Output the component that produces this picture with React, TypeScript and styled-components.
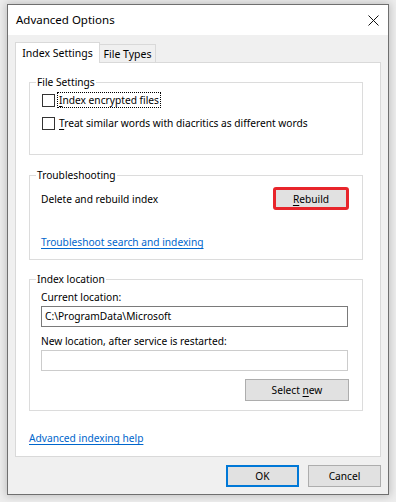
import * as React from 'react';
import styled, { createGlobalStyle, css } from 'styled-components';

const FONT = `'Noto Sans', 'Open Sans', 'DejaVu Sans', sans-serif`;
const FONT_SIZE = 10.2;

const GlobalStyle = createGlobalStyle`
  html, body {
    margin: 0;
    padding: 0;
  }
  body {
    background: #ededed;
    font-family: ${FONT};
    font-size: ${FONT_SIZE}px;
    color: #000;
  }
`;

const Stage = styled('div')`
  width: 396px;
  height: 502px;
  padding: 4px 0 0 7px;
  box-sizing: border-box;
  overflow: hidden;
`;

const Window = styled('div')`
  width: 382px;
  height: 491px;
  box-sizing: border-box;
  border: 1px solid #6f6f6f;
  background: #f0f0f0;
  box-shadow: 0 0 8px 1px rgba(0, 0, 0, 0.2);
  display: flex;
  flex-direction: column;
`;

const TitleBar = styled('div')`
  height: 30px;
  flex: none;
  background: #fff;
  display: flex;
  align-items: center;
  justify-content: space-between;
  padding-left: 8px;
`;

const Title = styled('span')`
  font-size: 11.5px;
  line-height: 16px;
`;

const CloseButton = styled('div')`
  width: 28px;
  height: 30px;
  display: flex;
  align-items: center;
  justify-content: center;
  margin-right: 1px;
`;

const Body = styled('div')`
  flex: 1;
  padding: 7px 7px 0;
  display: flex;
  flex-direction: column;
`;

const TabRow = styled('div')`
  height: 20px;
  display: flex;
  align-items: flex-end;
`;

const Tab = styled('div')<{ $active?: boolean }>`
  box-sizing: border-box;
  border: 1px solid #d9d9d9;
  border-bottom: none;
  display: flex;
  align-items: center;
  justify-content: center;
  line-height: 16px;
  font-size: 10.5px;

  ${props =>
    props.$active
      ? css`
          position: relative;
          z-index: 1;
          width: 85px;
          height: 21px;
          margin-bottom: -1px;
          background: #fff;
        `
      : css`
          width: 57px;
          height: 18px;
          margin-left: -1px;
          padding-top: 1px;
          background: #f0f0f0;
        `}
`;

const Panel = styled('div')`
  height: 395px;
  box-sizing: border-box;
  border: 1px solid #d9d9d9;
  background: #fff;
  padding: 12px 17px 0 13px;
`;

const Group = styled('fieldset')<{ $gap?: number }>`
  margin: ${props => props.$gap || 0}px 0 0;
  padding: 0 13px 0 11px;
  border: 1px solid #dcdcdc;
  min-width: 0;
`;

const Legend = styled('legend')`
  margin-left: -5px;
  padding: 0 1px;
  line-height: 14px;
`;

const CheckRow = styled('div')<{ $top: number; $bottom?: number }>`
  display: flex;
  align-items: center;
  height: 16px;
  margin-top: ${props => props.$top}px;
  margin-bottom: ${props => props.$bottom || 0}px;
`;

const CheckBox = styled('span')`
  width: 13px;
  height: 13px;
  box-sizing: border-box;
  border: 1px solid #333;
  background: #fff;
  margin: 0 2px 0 1px;
  flex: none;
`;

const CheckLabel = styled('span')<{ $focused?: boolean }>`
  line-height: 14px;
  padding: 0 1px;
  border: 1px dotted ${props => (props.$focused ? '#000' : 'transparent')};
  white-space: nowrap;
`;

const Mnemonic = styled('u')`
  text-decoration: underline;
  text-underline-offset: 2px;
`;

const ActionRow = styled('div')`
  display: flex;
  align-items: center;
  justify-content: space-between;
  margin-top: 5px;
`;

const Text = styled('div')<{ $top?: number }>`
  line-height: 16px;
  margin-top: ${props => props.$top || 0}px;
`;

const Link = styled('a')<{ $top?: number; $bottom?: number }>`
  display: block;
  width: max-content;
  line-height: 16px;
  color: #0066cc;
  text-decoration: underline;
  text-underline-offset: 2px;
  cursor: pointer;
  margin-top: ${props => props.$top || 0}px;
  margin-bottom: ${props => props.$bottom || 0}px;
`;

const Button = styled('button')<{ $width: number; $variant?: 'default' | 'highlight' | 'primary' }>`
  box-sizing: border-box;
  width: ${props => props.$width}px;
  height: 22px;
  padding: 0;
  font-family: ${FONT};
  font-size: ${FONT_SIZE}px;
  color: #000;
  background: #e1e1e1;
  border: 1px solid #adadad;

  ${props =>
    props.$variant === 'highlight' &&
    css`
      height: 23px;
      border: 3px solid #e8252b;
      border-radius: 3px;
    `}

  ${props =>
    props.$variant === 'primary' &&
    css`
      border: 2px solid #0078d7;
    `}
`;

const TextBox = styled('div')<{ $disabled?: boolean; $top: number }>`
  box-sizing: border-box;
  height: 21px;
  width: 307px;
  margin-top: ${props => props.$top}px;
  border: 1px solid ${props => (props.$disabled ? '#cccccc' : '#7a7a7a')};
  background: #fff;
  padding-left: 3px;
  line-height: 19px;
  white-space: nowrap;
`;

const ButtonEnd = styled('div')<{ $top: number; $bottom: number }>`
  display: flex;
  justify-content: flex-end;
  margin-top: ${props => props.$top}px;
  margin-bottom: ${props => props.$bottom}px;
`;

const Footer = styled('div')`
  display: flex;
  justify-content: flex-end;
  gap: 9px;
  margin-top: 8px;
`;

export default function App() {
  return (
    <>
      <GlobalStyle />
      <Stage>
        <Window>
          <TitleBar>
            <Title>Advanced Options</Title>
            <CloseButton>
              <svg width="11" height="11" viewBox="0 0 11 11">
                <path d="M0.5 0.5 L10.5 10.5 M10.5 0.5 L0.5 10.5" stroke="#111" strokeWidth="1" fill="none" />
              </svg>
            </CloseButton>
          </TitleBar>
          <Body>
            <TabRow>
              <Tab $active>Index Settings</Tab>
              <Tab>File Types</Tab>
            </TabRow>
            <Panel>
              <Group>
                <Legend>File Settings</Legend>
                <CheckRow $top={3}>
                  <CheckBox />
                  <CheckLabel $focused>
                    <Mnemonic>I</Mnemonic>ndex encrypted files
                  </CheckLabel>
                </CheckRow>
                <CheckRow $top={7} $bottom={23}>
                  <CheckBox />
                  <CheckLabel>
                    <Mnemonic>T</Mnemonic>reat similar words with diacritics as different words
                  </CheckLabel>
                </CheckRow>
              </Group>

              <Group $gap={13}>
                <Legend>Troubleshooting</Legend>
                <ActionRow>
                  <Text>Delete and rebuild index</Text>
                  <Button $width={76} $variant="highlight">
                    <Mnemonic>R</Mnemonic>ebuild
                  </Button>
                </ActionRow>
                <Link $top={24} $bottom={9}>
                  Troubleshoot search and indexing
                </Link>
              </Group>

              <Group $gap={12}>
                <Legend>Index location</Legend>
                <Text $top={3}>Current location:</Text>
                <TextBox $top={1}>C:\ProgramData\Microsoft</TextBox>
                <Text $top={6}>New location, after service is restarted:</Text>
                <TextBox $top={1} $disabled />
                <ButtonEnd $top={8} $bottom={9}>
                  <Button $width={104}>
                    Select <Mnemonic>n</Mnemonic>ew
                  </Button>
                </ButtonEnd>
              </Group>

              <Link $top={19}>Advanced indexing help</Link>
            </Panel>
            <Footer>
              <Button $width={73} $variant="primary">
                OK
              </Button>
              <Button $width={73}>Cancel</Button>
            </Footer>
          </Body>
        </Window>
      </Stage>
    </>
  );
}
